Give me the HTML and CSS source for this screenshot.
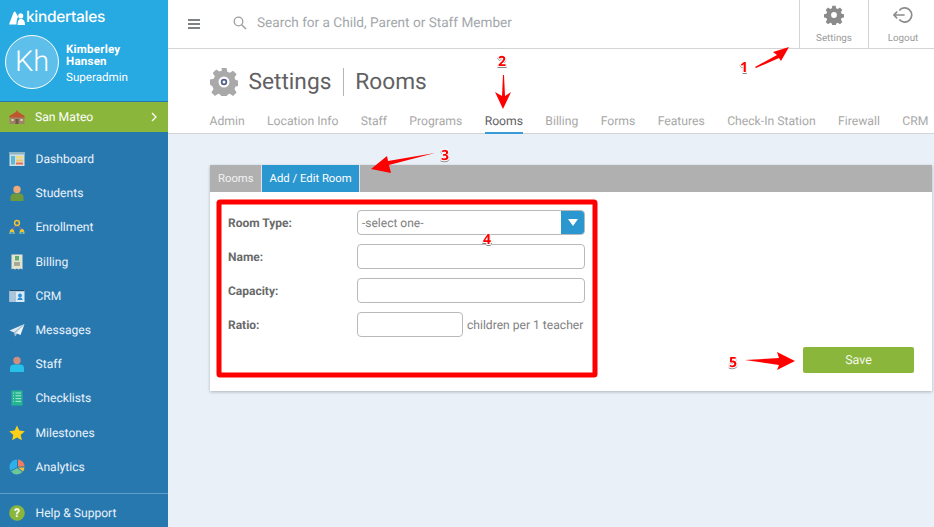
FILE: index.html
```html
<!DOCTYPE html>
<html lang="en">
<head>
<meta charset="utf-8">
<title>Kindertales - Rooms</title>
<link rel="stylesheet" href="styles.css">
</head>
<body>
<div class="app">
  <aside class="sidebar">
    <div class="brand">
      <div class="logo">
        <svg class="logo-mark" viewBox="0 0 15 14" width="16" height="15"><path d="M0 13.500 L3.800 3.500 Q5 0 6.500 2.500 L8.600 6.500 Q7 8 7 13.500Z" fill="#fff"/><path d="M8 14 Q8 8.500 11 8.500 Q15 8.500 15 14Z" fill="#fff"/><circle cx="11" cy="5.500" r="2.400" fill="#fff"/></svg>
        <span class="logo-text">kindertales</span>
      </div>
      <div class="user">
        <div class="avatar">Kh</div>
        <div class="user-info">
          <div class="user-name">Kimberley Hansen</div>
          <div class="user-role">Superadmin</div>
        </div>
      </div>
    </div>
    <div class="location">
      <svg class="nav-icon" viewBox="0 0 16 16" width="16" height="16"><path d="M8 0.500 L9 3 L15.500 7 L15.500 15 L0.500 15 L0.500 7 L7 3Z" fill="#a08468"/><path d="M0.500 7 L7 3 L8 1 L9 3 L15.500 7 L15.500 8.500 L0.500 8.500Z" fill="#c0552e"/><rect x="6.500" y="10" width="3" height="5" fill="#6d5948"/><rect x="2.500" y="10" width="2" height="2" fill="#e8d9b8"/><rect x="11.500" y="10" width="2" height="2" fill="#e8d9b8"/></svg>
      <span class="location-name">San Mateo</span>
      <svg class="chevron" viewBox="0 0 6 10" width="6" height="10"><path d="M1 1 L5 5 L1 9" fill="none" stroke="#fff" stroke-width="1.300"/></svg>
    </div>
    <nav class="nav">
      <a class="nav-item"><svg class="nav-icon" viewBox="0 0 16 16" width="16" height="16"><rect x="0.500" y="1" width="15" height="14" fill="#cfe0e6"/><rect x="0.500" y="1" width="15" height="2.500" fill="#8fb5c4"/><rect x="2" y="5" width="4" height="8.500" fill="#5fb8d8"/><rect x="7" y="5" width="7" height="2.500" fill="#f4d87a"/><rect x="7" y="8.500" width="7" height="2" fill="#f7c65a"/><rect x="7" y="11.500" width="7" height="2" fill="#ef6a4a"/></svg><span>Dashboard</span></a>
      <a class="nav-item"><svg class="nav-icon" viewBox="0 0 16 16" width="16" height="16"><path d="M1.500 16 V12.500 Q1.500 8.500 5 8.500 H11 Q14.500 8.500 14.500 12.500 V16Z" fill="#6f9a3b"/><circle cx="8" cy="4.500" r="3.700" fill="#efa877"/></svg><span>Students</span></a>
      <a class="nav-item"><svg class="nav-icon" viewBox="0 0 16 16" width="16" height="16"><path d="M8 6 L3 10 M8 6 L13 10" stroke="#8d6fb0" stroke-width="1"/><circle cx="8" cy="4" r="2.400" fill="none" stroke="#f2c230" stroke-width="1.500"/><path d="M0.500 15 Q0.500 10 3 10 Q5.500 10 5.500 15Z" fill="#f2c230"/><path d="M10.500 15 Q10.500 10 13 10 Q15.500 10 15.500 15Z" fill="#f2c230"/><rect x="1.500" y="13" width="3" height="2" fill="#2aa5e0"/><rect x="11.500" y="13" width="3" height="2" fill="#2aa5e0"/></svg><span>Enrollment</span></a>
      <a class="nav-item"><svg class="nav-icon" viewBox="0 0 16 16" width="16" height="16"><path d="M2.500 0.500 H13.500 V15.500 L11.500 14.500 L9.500 15.500 L8 14.500 L6 15.500 L4 14.500 L2.500 15.500Z" fill="#e3e3cf"/><rect x="6" y="2" width="4" height="4.500" fill="#5fae70"/><rect x="5" y="8" width="6" height="4" fill="#a8a89a"/></svg><span>Billing</span></a>
      <a class="nav-item"><svg class="nav-icon" viewBox="0 0 16 16" width="16" height="16"><rect x="0.500" y="2" width="15" height="12" fill="#d8ebf7"/><rect x="0.500" y="2" width="15" height="1.200" fill="#1f4e6f"/><rect x="0.500" y="3.200" width="6.500" height="10.800" fill="#a9c5da"/><path d="M8.500 12 Q8.500 9.500 11 9.500 Q13.500 9.500 13.500 12Z" fill="#2a8fd6"/><circle cx="11" cy="7.500" r="1.900" fill="#2a8fd6"/></svg><span>CRM</span></a>
      <a class="nav-item"><svg class="nav-icon" viewBox="0 0 16 16" width="16" height="16"><path d="M15.500 2 L0.500 8.500 L5 10.500Z" fill="#dfe9f1"/><path d="M15.500 2 L5 10.500 L6 14.500Z" fill="#b5c7d6"/><path d="M15.500 2 L7 11 L11.500 13Z" fill="#eef4f8"/></svg><span>Messages</span></a>
      <a class="nav-item"><svg class="nav-icon" viewBox="0 0 16 16" width="16" height="16"><path d="M1 16 V12.500 Q1 8.500 5 8.500 H11 Q15 8.500 15 12.500 V16Z" fill="#27c0e8"/><circle cx="8" cy="4.500" r="3.700" fill="#cf8f7f"/></svg><span>Staff</span></a>
      <a class="nav-item"><svg class="nav-icon" viewBox="0 0 16 16" width="16" height="16"><rect x="2.500" y="0.500" width="11" height="15" rx="0.500" fill="#26b590"/><path d="M4 3 H5 M6.500 3 H12 M4 5.800 H5 M6.500 5.800 H12 M4 8.600 H5 M6.500 8.600 H12 M4 11.400 H5 M6.500 11.400 H12" stroke="#a5e5d2" stroke-width="1"/></svg><span>Checklists</span></a>
      <a class="nav-item"><svg class="nav-icon" viewBox="0 0 16 16" width="16" height="16"><path d="M8 0.500 L10.300 5.500 L15.800 6.200 L11.700 9.900 L12.900 15.300 L8 12.500 L3.100 15.300 L4.300 9.900 L0.200 6.200 L5.700 5.500Z" fill="#fdd017"/></svg><span>Milestones</span></a>
      <a class="nav-item"><svg class="nav-icon" viewBox="0 0 16 16" width="16" height="16"><path d="M8 8 L8 0.500 A7.500 7.500 0 0 0 1.500 11.700Z" fill="#2db0ea"/><path d="M9 0.600 A7.500 7.500 0 0 1 15.500 7.500 L9 7.500Z" fill="#ef7c5e"/><path d="M9 8.500 H15.500 A7.500 7.500 0 0 1 14 12.500Z" fill="#f4bf34"/><path d="M2 12.500 L8 9 L13.500 13 A7.500 7.500 0 0 1 2 12.500Z" fill="#6dc59a"/></svg><span>Analytics</span></a>
    </nav>
    <a class="nav-item help"><svg class="nav-icon" viewBox="0 0 16 16" width="16" height="16"><circle cx="8" cy="8" r="7.800" fill="#8ab63c"/><text x="8" y="12" text-anchor="middle" class="help-mark">?</text></svg><span>Help &amp; Support</span></a>
  </aside>

  <main class="main">
    <header class="topbar">
      <svg class="burger" viewBox="0 0 12 10" width="12" height="10"><path d="M0 1 H12 M0 5 H12 M0 9 H12" stroke="#55595c" stroke-width="1.400"/></svg>
      <svg class="search-icon" viewBox="0 0 14 14" width="14" height="14"><circle cx="5.500" cy="5.500" r="4.300" fill="none" stroke="#9b9fa3" stroke-width="1.300"/><path d="M8.700 8.700 L13 13" stroke="#9b9fa3" stroke-width="1.500"/></svg>
      <div class="search-text">Search for a Child, Parent or Staff Member</div>
      <a class="top-action">
        <svg viewBox="0 0 24 24" width="20" height="20"><path fill="#8b8b8b" d="M10 1h4l.6 3 2 .8 2.600-1.700 2.800 2.800-1.700 2.600.8 2 3 .6v4l-3 .6-.8 2 1.700 2.600-2.800 2.800-2.600-1.700-2 .8-.6 3h-4l-.6-3-2-.8-2.600 1.700-2.800-2.800 1.700-2.600-.8-2-3-.6v-4l3-.6.8-2L2 5.900l2.800-2.800 2.600 1.700 2-.8zM12 8.500a3.500 3.500 0 1 0 0 7 3.500 3.500 0 0 0 0-7z"/></svg>
        <span>Settings</span>
      </a>
      <a class="top-action last">
        <svg viewBox="0 0 24 24" width="20" height="20" fill="none" stroke="#8b8b8b" stroke-width="2"><path d="M7.500 6.500 A8.500 8.500 0 1 1 7.500 17.500"/><path d="M1 12 H14 M5 8 L1 12 L5 16"/></svg>
        <span>Logout</span>
      </a>
    </header>

    <section class="page-head">
      <div class="title-row">
        <svg class="title-gear" viewBox="0 0 28 28" width="28" height="28"><path fill="#a9a9a9" d="M11.500 0h5l.8 3.800 2.500 1 3.300-2.100 3.500 3.500-2.100 3.300 1 2.500 3.800.8v5l-3.800.8-1 2.500 2.100 3.300-3.500 3.500-3.300-2.100-2.500 1-.8 3.800h-5l-.8-3.800-2.500-1-3.300 2.100-3.500-3.500 2.100-3.300-1-2.500L0 16.500v-5l3.800-.8 1-2.500-2.100-3.300 3.500-3.500 3.300 2.100 2.500-1z"/><circle cx="14" cy="14" r="5.500" fill="#fff"/><circle cx="14" cy="14" r="3.200" fill="#4f5f85"/><circle cx="14" cy="14" r="1.500" fill="#fff"/></svg>
        <h1 class="title">Settings</h1>
        <h2 class="subtitle">Rooms</h2>
      </div>
      <nav class="tabs">
        <a class="tab">Admin</a>
        <a class="tab">Location Info</a>
        <a class="tab">Staff</a>
        <a class="tab">Programs</a>
        <a class="tab active">Rooms</a>
        <a class="tab">Billing</a>
        <a class="tab">Forms</a>
        <a class="tab">Features</a>
        <a class="tab">Check-In Station</a>
        <a class="tab">Firewall</a>
        <a class="tab">CRM</a>
      </nav>
    </section>

    <section class="content">
      <div class="card">
        <div class="card-tabs">
          <a class="card-tab">Rooms</a>
          <a class="card-tab selected">Add / Edit Room</a>
        </div>
        <div class="card-body">
          <form class="form">
            <div class="field"><label>Room Type:</label><div class="control select"><span>-select one-</span><i class="select-btn"><svg viewBox="0 0 10 7" width="10" height="7"><path d="M0 0 H10 L5 7Z" fill="#fff"/></svg></i></div></div>
            <div class="field"><label>Name:</label><div class="control"></div></div>
            <div class="field"><label>Capacity:</label><div class="control"></div></div>
            <div class="field"><label>Ratio:</label><div class="control short"></div><span class="hint">children per 1 teacher</span></div>
          </form>
          <div class="actions"><a class="save">Save</a></div>
        </div>
      </div>
    </section>
  </main>
</div>

<svg class="markup" viewBox="0 0 934 527" width="934" height="527">
  <defs>
    <filter id="halo" x="-40%" y="-40%" width="180%" height="180%"><feDropShadow dx="0" dy="1" stdDeviation="0.700" flood-color="#555" flood-opacity="0.700"/></filter>
  </defs>
  <rect x="219" y="202" width="376" height="173" rx="1" class="box"/>
  <path class="arrow" d="M755 67 L777 55 L773 52 L789 47 L781 61 L779 58 L756 68Z"/>
  <path class="arrow" d="M503 75 L504 75 L505 96 L511 92 L503 109 L495 92 L502 96Z"/>
  <path class="arrow" d="M435 153 L389 165 L391 173 L371 169 L387 156 L388 161Z"/>
  <path class="arrow" d="M745 360 L779 358 L777 352 L795 361 L777 370 L779 365Z"/>
  <text x="744" y="72" class="num">1</text>
  <text x="502" y="66" class="num">2</text>
  <text x="445" y="160" class="num">3</text>
  <text x="487" y="244" class="num">4</text>
  <text x="733" y="367" class="num">5</text>
</svg>
</body>
</html>
```

FILE: styles.css
```css
* { box-sizing: border-box; }
html, body { margin: 0; padding: 0; height: 100%; overflow: hidden; }
body { position: relative; font-family: Roboto, "Liberation Sans", sans-serif; color: #6f6f6f; background: #e9f0f8; text-rendering: geometricPrecision; }
a { text-decoration: none; color: inherit; }
h1, h2 { margin: 0; font-weight: 400; }

.app { display: flex; width: 934px; height: 527px; overflow: hidden; }

.sidebar { width: 168px; flex: none; display: flex; flex-direction: column; background: #2878b0; color: #fff; }
.brand { height: 101px; background: #27a9e1; padding: 7px 0 0 9px; }
.logo { display: flex; align-items: center; gap: 1px; height: 20px; }
.logo-text { font-family: Inter, Roboto, sans-serif; font-size: 15.500px; font-weight: 500; letter-spacing: -0.300px; line-height: 20px; }
.user { display: flex; align-items: center; gap: 7px; margin: 8px 0 0 -4px; }
.avatar { width: 54px; height: 54px; flex: none; border: 1px solid #fff; border-radius: 50%; background: #5dbfea; display: flex; align-items: center; justify-content: center; font-size: 29px; font-weight: 300; }
.user-info { padding-top: 3px; }
.user-name { font-size: 11.600px; font-weight: 700; line-height: 12px; letter-spacing: 0.200px; width: 70px; }
.user-role { font-size: 11.600px; line-height: 14px; margin-top: 3px; }

.location { height: 30px; margin-top: 1px; display: flex; align-items: center; background: #8ab63c; padding: 0 11px 1px 9px; font-size: 12.200px; }
.location-name { margin-left: 10px; flex: 1; }
.chevron { flex: none; }

.nav { flex: 1; margin-top: 1px; padding-top: 9px; }
.nav-item { height: 34.200px; display: flex; align-items: center; padding-left: 9px; font-size: 12.100px; color: #eaf3fa; }
.nav-item span { margin-left: 10.500px; }
.nav-icon { flex: none; }
.help { height: 34px; border-top: 1px solid #5f9fc9; padding-top: 4px; }
.help-mark { font-family: Roboto, sans-serif; font-size: 12px; font-weight: 700; fill: #fff; }

.main { flex: 1; min-width: 0; display: flex; flex-direction: column; }
.topbar { height: 49px; flex: none; background: #fff; border-bottom: 1px solid #d4d4d4; display: flex; align-items: center; padding-left: 20px; }
.burger { flex: none; }
.search-icon { flex: none; margin: 0 0 2px 33px; }
.search-text { flex: 1; margin: 0 0 2px 10px; font-size: 13.600px; color: #a3a7aa; }
.top-action { width: 69px; height: 48px; flex: none; border-left: 1px solid #d4d4d4; display: flex; flex-direction: column; align-items: center; padding-top: 5px; gap: 8px; font-size: 9.800px; color: #9a9a9a; }
.top-action.last { margin-right: -3px; }

.page-head { height: 85px; flex: none; background: #fff; border-bottom: 1px solid #d4d4d4; padding: 19px 0 0 41.500px; }
.title-row { display: flex; align-items: center; height: 28px; }
.title { font-size: 22.700px; color: #5f6163; margin-left: 11px; padding-right: 12px; border-right: 1px solid #b5b5b5; line-height: 28px; }
.subtitle { font-size: 22.700px; color: #5f6163; margin-left: 11px; line-height: 28px; }
.tabs { display: flex; gap: 22.300px; margin-top: 12px; white-space: nowrap; }
.tab { font-size: 12.200px; line-height: 26px; height: 26px; color: #a8a8a8; }
.tab.active { color: #5f6163; border-bottom: 2px solid #3a9ad5; }

.content { flex: 1; padding: 31px 2px 0 42px; }
.card { background: #fff; height: 226px; box-shadow: 0 1px 3px rgba(0, 0, 0, 0.250); display: flex; flex-direction: column; }
.card-tabs { height: 27px; background: #b0b0b0; display: flex; flex: none; }
.card-tab { padding: 0 7px 0 8px; font-size: 11.300px; line-height: 27px; color: #f2f2f2; border-right: 1px solid #e3e3e3; }
.card-tab.selected { background: #2b97d1; color: #fff; }
.card-body { flex: 1; display: flex; flex-direction: column; padding: 18px 18px 0 18px; }
.form { display: flex; flex-direction: column; gap: 9px; }
.field { display: flex; align-items: center; height: 25px; font-size: 12px; }
.field label { width: 129px; font-weight: 700; color: #6a6a6a; }
.control { width: 228px; height: 25px; border: 1px solid #b9b9b9; border-radius: 4px; background: #fff; }
.control.short { width: 106px; }
.select { display: flex; align-items: center; justify-content: space-between; padding-left: 4px; color: #808080; overflow: hidden; }
.select-btn { width: 24px; height: 25px; background: #2b97d1; display: flex; align-items: center; justify-content: center; margin-right: -1px; }
.hint { margin-left: 4px; color: #808080; font-size: 12.100px; }
.actions { display: flex; justify-content: flex-end; margin-top: 10px; }
.save { width: 111px; height: 26px; background: #8ab63c; border-radius: 2px; color: #f4f8ea; font-size: 12.500px; line-height: 27px; text-align: center; }

.markup { position: absolute; left: 0; top: 0; pointer-events: none; }
.box { fill: none; stroke: #f00; stroke-width: 5; }
.arrow { fill: #f00; }
.num { font-family: "Open Sans", Roboto, sans-serif; font-size: 14px; font-weight: 700; fill: #f00; text-anchor: middle; paint-order: stroke; stroke: #fff; stroke-width: 2px; filter: url(#halo); }
```
